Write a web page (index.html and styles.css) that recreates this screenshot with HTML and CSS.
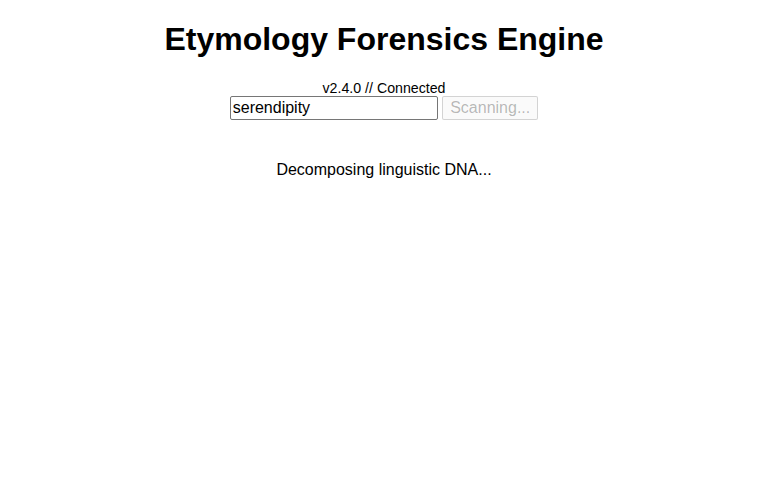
FILE: index.html
```html
<!DOCTYPE html>
<html>
<head>
<meta charset="utf-8">
<link rel="stylesheet" href="styles.css">
</head>
<body>
<div class="app">
  <h1 class="title">Etymology Forensics Engine</h1>
  <div class="status">v2.4.0 // Connected</div>
  <form class="search">
    <input class="query" type="text" value="serendipity">
    <button class="scan" type="button" disabled>Scanning...</button>
  </form>
  <p class="loading">Decomposing linguistic DNA...</p>
</div>
</body>
</html>
```
FILE: styles.css
```css
body {
  margin: 8px;
  font-family: "Liberation Sans", Arial, sans-serif;
  font-size: 16px;
  color: #000;
  background: #fff;
}
.app {
  text-align: center;
}
.title {
  font-size: 32px;
  font-weight: bold;
  margin: 13px 0 22px;
}
.status {
  font-size: 14.2px;
  line-height: 16px;
}
.search {
  margin: 0;
}
.query {
  font: inherit;
  width: 202px;
  height: 20px;
  padding: 1px 2px;
  border: 1px solid #767676;
  border-radius: 2px;
  box-sizing: content-box;
  vertical-align: top;
}
.scan {
  font: inherit;
  height: 24px;
  padding: 1px 7px;
  border: 1px solid rgba(118,118,118,0.3);
  border-radius: 2px;
  background: rgba(239,239,239,0.3);
  color: rgba(16,16,16,0.3);
  vertical-align: top;
}
.loading {
  margin: 41px 0 0;
  line-height: 18px;
}
```
